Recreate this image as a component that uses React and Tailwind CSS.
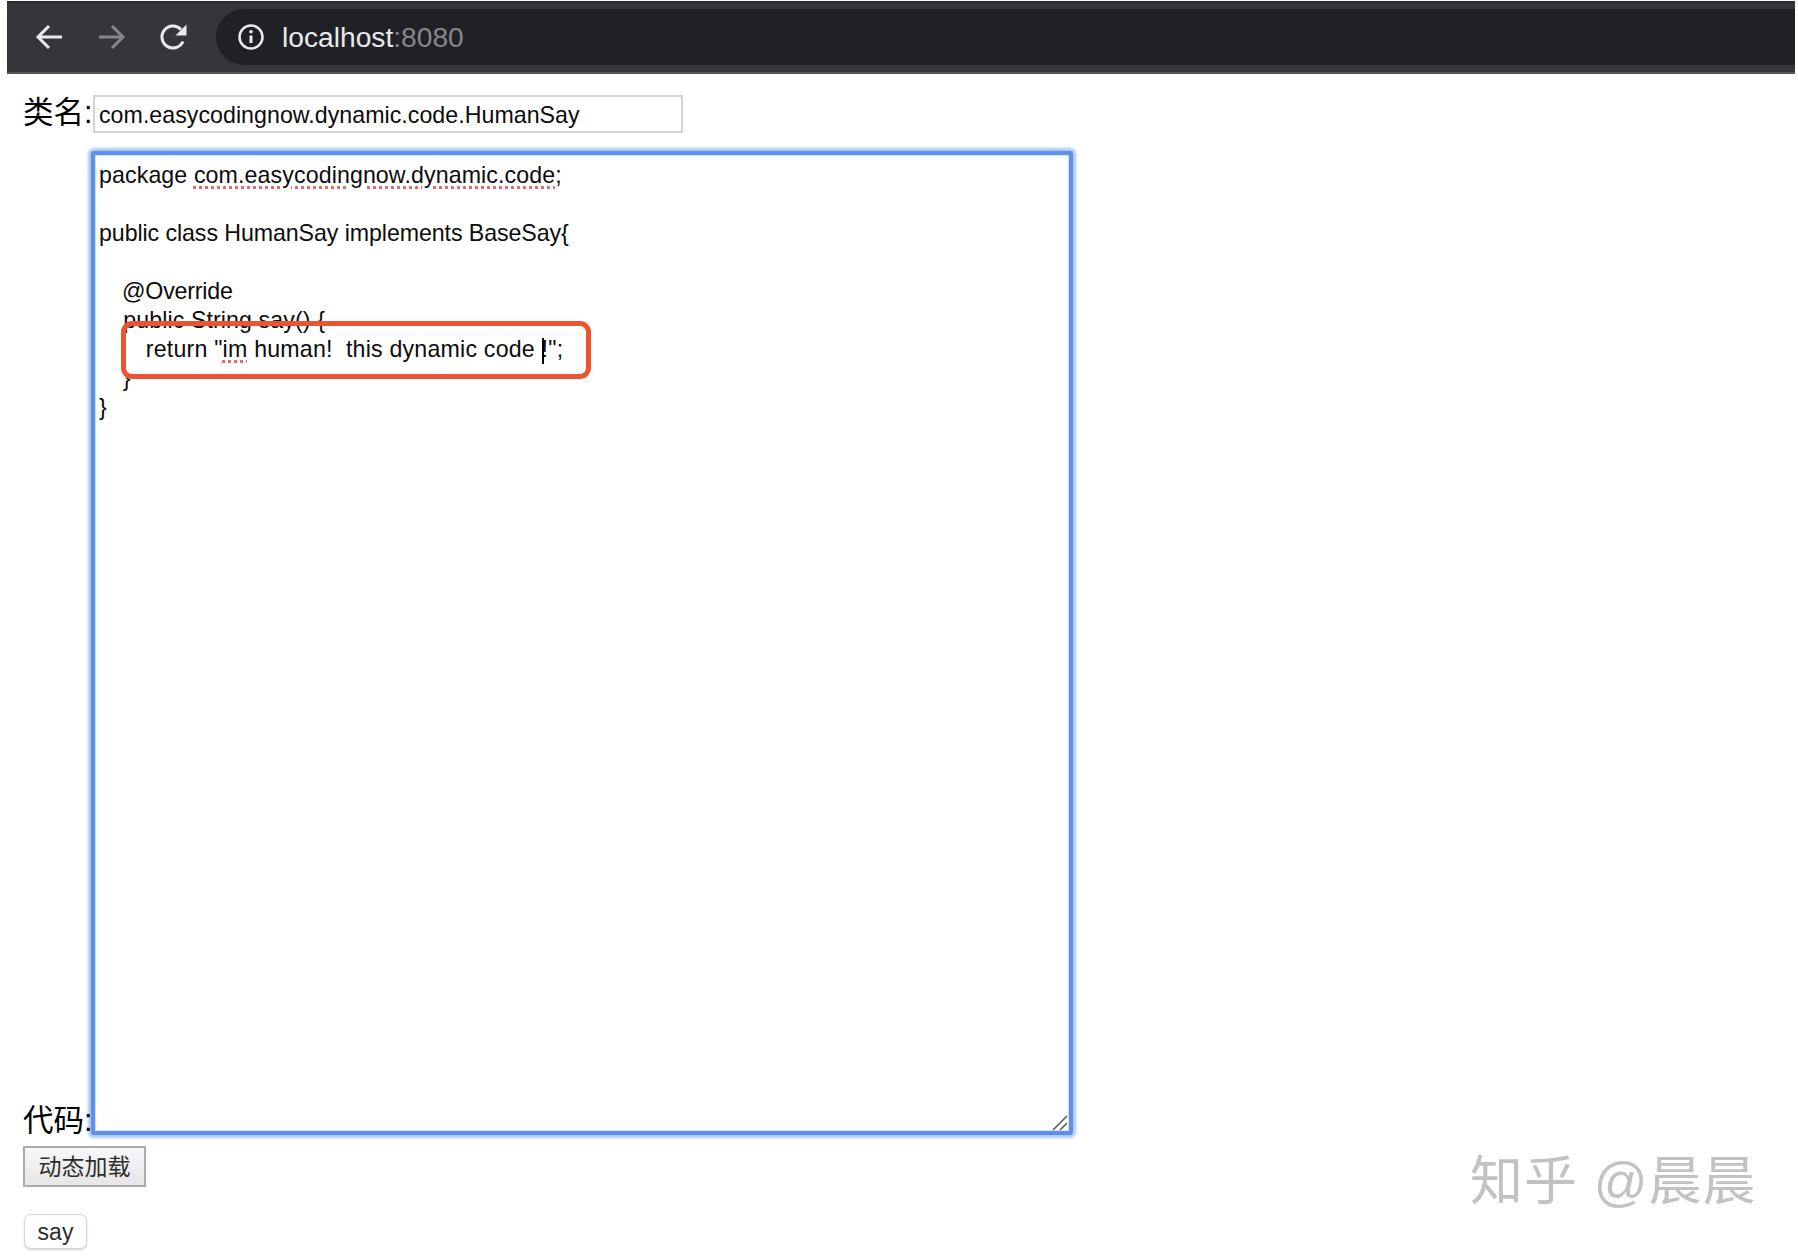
import React from "react";

const sans = "font-['Liberation_Sans','Noto_Sans_CJK_SC',sans-serif]";

function Toolbar() {
  return (
    <div className="ml-[7px] mr-[3px] mt-px h-[73px] pb-px bg-[#35363a] flex items-center border-b-2 border-[#55565a] border-t-[2px] border-t-[#2a2b2e]">
      <div className="flex items-center gap-[30px] pl-[26px] w-[209px] shrink-0">
        <svg width="32" height="32" viewBox="0 0 32 32" fill="none" stroke="#e8eaed" strokeWidth="3">
          <path d="M29 16H6M16 5 5 16 16 27" />
        </svg>
        <svg width="32" height="32" viewBox="0 0 32 32" fill="none" stroke="#85878a" strokeWidth="3">
          <path d="M4 16h23M17 5 28 16 17 27" />
        </svg>
        <svg width="32" height="32" viewBox="0 0 32 32" fill="none">
          <path d="M26 20.500A11 11 0 1 1 24 8.500" stroke="#e8eaed" strokeWidth="3" />
          <path d="M29.500 3.500v11h-11z" fill="#e8eaed" />
        </svg>
      </div>
      <div className="flex-1 h-[56px] bg-[#202124] rounded-l-[28px] flex items-center pl-[21px] gap-[17px]">
        <svg width="28" height="28" viewBox="0 0 28 28" fill="none">
          <circle cx="14" cy="14" r="11.500" stroke="#e8eaed" strokeWidth="2.500" />
          <path d="M14 12.500v7.500" stroke="#e8eaed" strokeWidth="3" />
          <circle cx="14" cy="8.800" r="1.800" fill="#e8eaed" />
        </svg>
        <span className={`${sans} text-[28.2px] leading-none text-[#e8eaed]`}>
          localhost<span className="text-[#85878a]">:8080</span>
        </span>
      </div>
    </div>
  );
}

const codeLine = "h-[29px] leading-[29px] whitespace-pre";
const squiggle = "underline decoration-dotted decoration-[#e66a6e] decoration-[3px] underline-offset-[3px]";
const indent = "[word-spacing:-0.5px]";

function CodeBox() {
  return (
    <div className="relative w-[982px] h-[984px] shrink-0 border-[4px] border-[#5f8fe6] rounded-[3px] bg-white shadow-[0_0_3px_3px_#a9c6f5,inset_0_0_1px_1px_#cfe0fa] px-[4px] pt-[6px] text-[23.2px] text-[#0c0c0c]">
      <div className={`${codeLine} tracking-[0.1px]`}>
        package <span className={squiggle}>com.easycodingnow.dynamic.code</span>;
      </div>
      <div className={codeLine}></div>
      <div className={`${codeLine} tracking-[-0.08px]`}>public class HumanSay implements BaseSay{"{"}</div>
      <div className={codeLine}></div>
      <div className={`${codeLine} tracking-[-0.2px]`}><span className={indent}>{"    "}</span>@Override</div>
      <div className={`${codeLine} relative z-20 tracking-[0.1px]`}>
        <span className={indent}>{"    "}</span>public String say() {"{"}
      </div>
      <div className={`${codeLine} relative z-20 tracking-[0.2px]`}>
        <span className="[word-spacing:-0.8px]">{"        "}</span>
        {'return "'}
        <span className={squiggle}>im</span>
        {" human!  this dynamic code "}
        <span className="inline-block w-[2px] h-[26px] bg-black align-middle -mr-[2px]"></span>
        {'!";'}
      </div>
      <div className={codeLine}><span className={indent}>{"    "}</span>{"}"}</div>
      <div className={codeLine}>{"}"}</div>
      <div className="absolute z-10 left-[26px] top-[166px] w-[470px] h-[58px] bg-white rounded-[11px]"></div>
      <div className="absolute z-30 left-[26px] top-[166px] w-[470px] h-[58px] border-[5px] border-[#ea5430] rounded-[11px]"></div>
      <svg className="absolute right-0 bottom-0" width="18" height="18" viewBox="0 0 18 18" fill="none" stroke="#555" strokeWidth="1.500">
        <path d="M2 17 16 3M9 17l7-7" />
      </svg>
    </div>
  );
}

export default function App() {
  return (
    <div className={`${sans} relative w-[1798px] h-[1256px] bg-white text-black overflow-hidden`}>
      <Toolbar />
      <div className="pl-[23px] pt-[21px]">
        <div className="flex items-center h-[38px]">
          <span className="w-[70px] text-[30.5px] leading-none shrink-0 whitespace-nowrap pb-[3px]">类名:</span>
          <input
            readOnly
            value="com.easycodingnow.dynamic.code.HumanSay"
            className={`${sans} w-[590px] h-[38px] border-2 border-[#d4d4d4] pl-[4px] pt-[2px] text-[23.2px] tracking-[0.03px] text-[#0c0c0c] outline-none`}
          />
        </div>
        <div className="flex items-end mt-[18px] h-[984px]">
          <span className="relative z-10 w-[68px] text-[30.5px] leading-[30px] shrink-0 whitespace-nowrap">代码:</span>
          <CodeBox />
        </div>
        <div className="mt-[11px]">
          <button className="block w-[123px] h-[41px] pt-[2px] border-2 border-[#acacac] bg-gradient-to-b from-[#f8f8f8] to-[#e6e6e6] text-[23px] text-[#2e2e2e] leading-none">
            动态加载
          </button>
          <button className="block mt-[27px] ml-px w-[63px] h-[35px] pt-[2px] border border-[#d6d6d6] rounded-[7px] bg-white shadow-[0_1px_2px_#cfcfcf] text-[23px] text-[#2e2e2e] leading-none">
            say
          </button>
        </div>
      </div>
      <div className="absolute left-[1470px] top-[1150px] text-[53px] leading-[64px] tracking-[1px] text-[#c2c2c2] whitespace-pre">
        知乎 @晨晨
      </div>
    </div>
  );
}
